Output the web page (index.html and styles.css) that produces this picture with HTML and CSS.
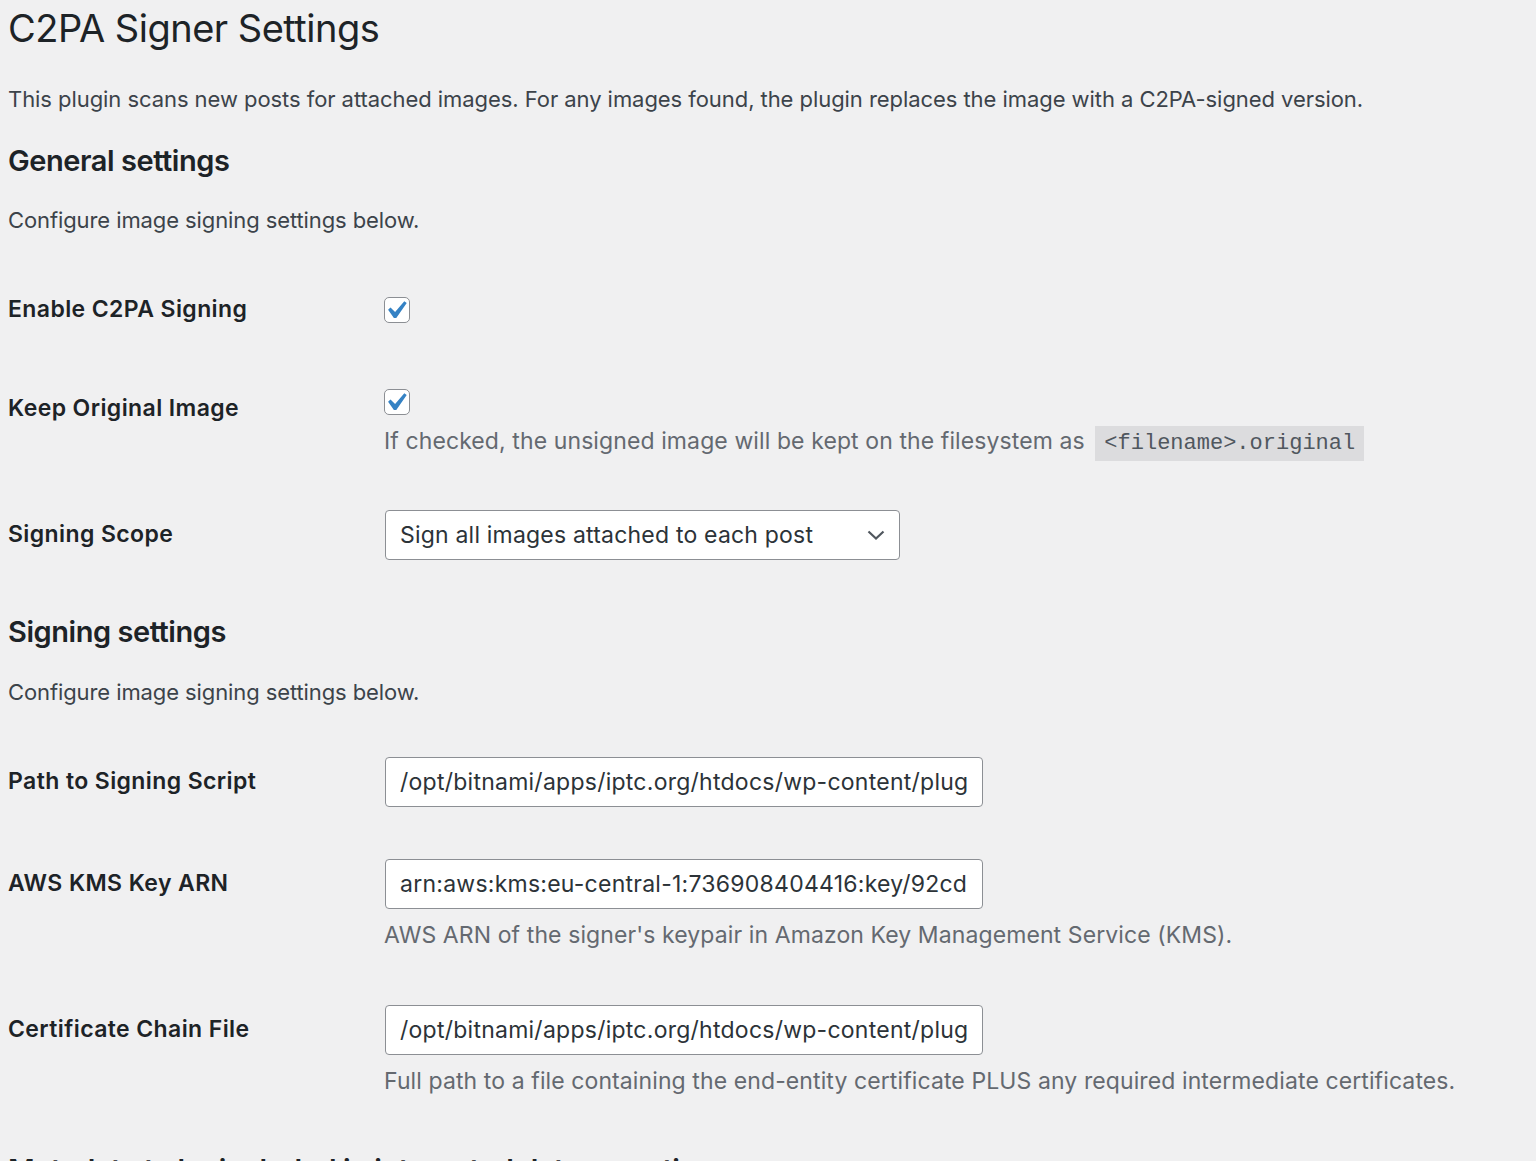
FILE: index.html
```html
<!DOCTYPE html>
<html>

	<head>
		<meta charset="UTF-8">
		<title>C2PA Signer Settings</title>
		<link rel="stylesheet" href="styles.css">
	</head>

	<body>
		<div class="wrap">
			<h1 class="page-title">C2PA Signer Settings</h1>
			<p class="intro">This plugin scans new posts for attached images. For any images found, the plugin replaces the image with a C2PA-signed version.</p>

			<form>
				<h2 class="section-title">General settings</h2>
				<p class="section-desc">Configure image signing settings below.</p>

				<div class="row row-first">
					<div class="row-label">Enable C2PA Signing</div>
					<div class="row-field">
						<span class="checkbox">
							<svg width="26" height="26" viewBox="3.5 2.5 14.5 14.5"><path d="M14.83 4.89l1.34.94-5.81 8.38H9.02L5.78 9.67l1.34-1.25 2.57 2.4z" fill="#3582c4"/></svg>
						</span>
					</div>
				</div>

				<div class="row row-check">
					<div class="row-label">Keep Original Image</div>
					<div class="row-field">
						<span class="checkbox">
							<svg width="26" height="26" viewBox="3.5 2.5 14.5 14.5"><path d="M14.83 4.89l1.34.94-5.81 8.38H9.02L5.78 9.67l1.34-1.25 2.57 2.4z" fill="#3582c4"/></svg>
						</span>
						<p class="description">If checked, the unsigned image will be kept on the filesystem as <code>&lt;filename&gt;.original</code></p>
					</div>
				</div>

				<div class="row">
					<div class="row-label">Signing Scope</div>
					<div class="row-field">
						<div class="select-wrap">
							<select class="select">
								<option>Sign all images attached to each post</option>
							</select>
							<!-- chevron -->
							<svg class="select-arrow" width="22" height="22" viewBox="0 0 22 22"><path d="M3.5 7.5l7.5 7 7.5-7" fill="none" stroke="#50575e" stroke-width="2.2"/></svg>
						</div>
					</div>
				</div>

				<h2 class="section-title section-next">Signing settings</h2>
				<p class="section-desc">Configure image signing settings below.</p>

				<div class="row">
					<div class="row-label">Path to Signing Script</div>
					<div class="row-field">
						<input class="text-input" type="text" value="/opt/bitnami/apps/iptc.org/htdocs/wp-content/plugins/c2pa-signer/sign.sh">
					</div>
				</div>

				<div class="row">
					<div class="row-label">AWS KMS Key ARN</div>
					<div class="row-field">
						<input class="text-input" type="text" value="arn:aws:kms:eu-central-1:736908404416:key/92cd4f1a-7c2e-4b7d-9f0e-3a1b5c6d7e8f">
						<p class="description">AWS ARN of the signer's keypair in Amazon Key Management Service (KMS).</p>
					</div>
				</div>

				<div class="row">
					<div class="row-label">Certificate Chain File</div>
					<div class="row-field">
						<input class="text-input" type="text" value="/opt/bitnami/apps/iptc.org/htdocs/wp-content/plugins/c2pa-signer/chain.pem">
						<p class="description">Full path to a file containing the end-entity certificate PLUS any required intermediate certificates.</p>
					</div>
				</div>

				<h2 class="section-title section-last">Metadata to be included in integrated data assertions</h2>
			</form>
		</div>
	</body>

</html>
```

FILE: styles.css
```css
html,
body {
	margin: 0;
	background: #f0f0f1;
}

body {
	font-family: Inter, "Noto Sans", sans-serif;
	color: #3c434a;
	overflow: hidden;
}

.wrap {
	padding: 0 8px;
}

.page-title {
	margin: 0;
	padding-top: 1px;
	font-size: 38px;
	line-height: 54px;
	font-weight: 400;
	letter-spacing: -0.5px;
	color: #1d2327;
}

.intro {
	margin: 29px 0 0;
	font-size: 22px;
	line-height: 30px;
	letter-spacing: -0.06px;
}

.section-title {
	margin: 28px 0 0;
	font-size: 29px;
	line-height: 38px;
	font-weight: 600;
	letter-spacing: -0.45px;
	color: #1d2327;
}

.section-next {
	margin-top: 21px;
}

.section-last {
	margin-top: 20px;
}

.section-desc {
	margin: 25px 0 30px;
	font-size: 22px;
	line-height: 30px;
	letter-spacing: -0.1px;
}

.section-next + .section-desc {
	margin-top: 26px;
}

/* form rows */
.row {
	display: flex;
	align-items: flex-start;
}

.row-label {
	width: 377px;
	flex: none;
	padding-top: 29px;
	font-size: 23px;
	line-height: 30px;
	font-weight: 600;
	letter-spacing: 0.4px;
	color: #1d2327;
}

.row-field {
	padding: 20px 0 32px;
}

.row-first .row-field {
	padding: 32px 0 41px;
}

.row-check .row-field {
	padding: 25px 0 31px;
}

.checkbox {
	display: block;
	width: 26px;
	height: 26px;
	margin-left: -1px;
	box-sizing: border-box;
	border: 1.5px solid #8c8f94;
	border-radius: 5px;
	background: #fff;
	overflow: hidden;
}

.checkbox svg {
	display: block;
	margin: -1.5px 0 0 -1.5px;
}

.description {
	margin: 11px 0 3px -1px;
	font-size: 23px;
	line-height: 30px;
	letter-spacing: 0.1px;
	color: #646970;
}

.description code {
	padding: 5px 9px;
	margin-left: 4px;
	background: #dcdcde;
	font-family: "Liberation Mono", "DejaVu Sans Mono", monospace;
	font-size: 22px;
	line-height: 22px;
	letter-spacing: 0;
	color: #50575e;
}

.select-wrap {
	position: relative;
	width: 515px;
}

.select {
	display: block;
	width: 100%;
	height: 50px;
	margin: 0;
	padding: 0 44px 0 14px;
	border: 1px solid #8c8f94;
	border-radius: 4px;
	background: #fff;
	font-family: Inter, "Noto Sans", sans-serif;
	font-size: 23px;
	letter-spacing: 0.2px;
	color: #2c3338;
	-webkit-appearance: none;
	appearance: none;
}

.select-arrow {
	position: absolute;
	right: 13px;
	top: 14px;
}

.text-input {
	display: block;
	box-sizing: border-box;
	width: 598px;
	height: 50px;
	margin: 0;
	padding: 0 14px;
	border: 1px solid #8c8f94;
	border-radius: 4px;
	background: #fff;
	font-family: Inter, "Noto Sans", sans-serif;
	font-size: 23px;
	letter-spacing: 0.25px;
	color: #2c3338;
}
```
